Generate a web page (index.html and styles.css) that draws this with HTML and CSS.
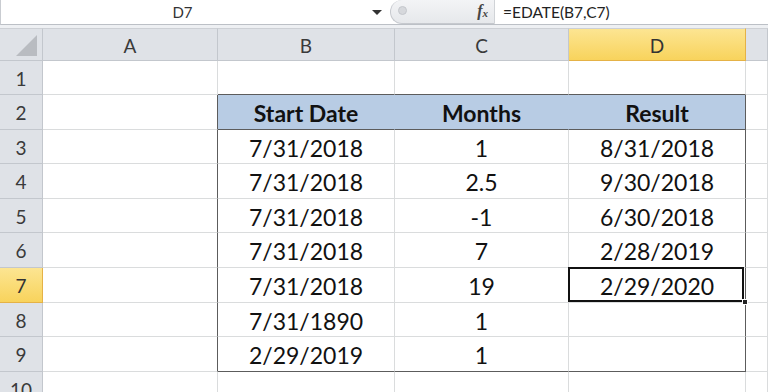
FILE: index.html
```html
<!DOCTYPE html>
<html>
<head>
<meta charset="utf-8">
<link rel="stylesheet" href="styles.css">
</head>
<body>
<div class="app">
  <div class="topbar">
    <div class="namebox">
      <span class="name">D7</span>
      <span class="arrow"></span>
    </div>
    <div class="fxbtns">
      <span class="knob"></span>
      <span class="fx">f<sub>x</sub></span>
    </div>
    <div class="formula">=EDATE(B7,C7)</div>
  </div>
  <div class="sep"></div>
  <div class="sheet">
    <div class="corner"><span class="tri"></span></div>
    <div class="ch">A</div><div class="ch">B</div><div class="ch">C</div><div class="ch selh">D</div><div class="ch"></div>

    <div class="rh">1</div><div class="c"></div><div class="c t-top"></div><div class="c t-top"></div><div class="c t-top"></div><div class="c"></div>

    <div class="rh">2</div><div class="c t-l"></div><div class="c th">Start Date</div><div class="c th">Months</div><div class="c th t-r">Result</div><div class="c"></div>

    <div class="rh">3</div><div class="c t-l"></div><div class="c">7/31/2018</div><div class="c">1</div><div class="c t-r">8/31/2018</div><div class="c"></div>

    <div class="rh">4</div><div class="c t-l"></div><div class="c">7/31/2018</div><div class="c">2.5</div><div class="c t-r">9/30/2018</div><div class="c"></div>

    <div class="rh">5</div><div class="c t-l"></div><div class="c">7/31/2018</div><div class="c">-1</div><div class="c t-r">6/30/2018</div><div class="c"></div>

    <div class="rh">6</div><div class="c t-l"></div><div class="c">7/31/2018</div><div class="c">7</div><div class="c t-r">2/28/2019</div><div class="c"></div>

    <div class="rh selh">7</div><div class="c t-l"></div><div class="c">7/31/2018</div><div class="c">19</div><div class="c t-r sel">2/29/2020<span class="handle"></span></div><div class="c"></div>

    <div class="rh">8</div><div class="c t-l"></div><div class="c">7/31/1890</div><div class="c">1</div><div class="c t-r"></div><div class="c"></div>

    <div class="rh">9</div><div class="c t-l"></div><div class="c t-bot">2/29/2019</div><div class="c t-bot">1</div><div class="c t-r t-bot"></div><div class="c"></div>

    <div class="rh">10</div><div class="c"></div><div class="c"></div><div class="c"></div><div class="c"></div><div class="c"></div>
  </div>
</div>
</body>
</html>
```
FILE: styles.css
```css
* { box-sizing: border-box; }
html, body { margin: 0; padding: 0; background: #fff; }
body { width: 768px; height: 392px; overflow: hidden; font-family: Lato, "Open Sans", sans-serif; color: #111; }

.app { display: flex; flex-direction: column; height: 392px; overflow: hidden; }

.topbar {
  display: flex;
  flex: none;
  height: 25px;
  border-bottom: 1px solid #bcc0c6;
  border-left: 1px solid #c9ccd1;
  background: #fff;
}
.namebox {
  width: 389px;
  display: flex;
  align-items: center;
}
.name {
  width: 363px;
  text-align: center;
  font-size: 15px;
  color: #333;
}
.arrow {
  width: 0; height: 0;
  margin-left: 8px;
  border-left: 5px solid transparent;
  border-right: 5px solid transparent;
  border-top: 5px solid #333;
}
.fxbtns {
  width: 105px;
  height: 24px;
  background: linear-gradient(#f3f4f6, #e6e8eb);
  border: 1px solid #c6c9ce;
  border-right: 1px solid #d0d3d7;
  border-top: none;
  border-radius: 12px 0 0 12px;
  display: flex;
  align-items: center;
  justify-content: space-between;
  padding: 0 6px 0 7px;
}
.knob {
  width: 9px; height: 9px;
  border-radius: 50%;
  background: #d6d8dc;
  border: 1px solid #c4c7cc;
  margin-top: -3px;
}
.fx {
  font-family: "Liberation Serif", serif;
  font-style: italic;
  font-weight: bold;
  font-size: 16px;
  color: #444;
  margin-top: -2px;
}
.fx sub { font-size: 11px; vertical-align: -1px; }
.formula {
  flex: 1;
  display: flex;
  align-items: center;
  padding-left: 8px;
  font-size: 15.5px;
  color: #222;
}
.sep { flex: none; height: 3px; background: #eef0f3; }

.sheet {
  flex: none;
  display: grid;
  grid-template-columns: 43px 175px 177px 174px 177px 1fr;
  grid-template-rows: 33px 34px 35px 34px 35px 34px 35px 35px 34px 35px 35px;
}

.corner, .ch, .rh {
  background: #dfe2e7;
  border-right: 1px solid #c3c7cd;
  border-bottom: 1px solid #c3c7cd;
  color: #3a3a3a;
  display: flex;
  align-items: center;
  justify-content: center;
  font-size: 19px;
}
.corner { position: relative; border-top: 1px solid #cdd0d5; }
.ch { border-top: 1px solid #cdd0d5; padding-top: 2px; }
.rh { padding-top: 1px; }
.tri {
  position: absolute;
  right: 5px; bottom: 4px;
  width: 0; height: 0;
  border-left: 21px solid transparent;
  border-bottom: 21px solid #b9bcc1;
}
.selh {
  background: linear-gradient(#fce592, #f8d35c);
  border-right-color: #e5b246;
  border-bottom-color: #e5b246;
  color: #333;
}

.c {
  border-right: 1px solid #dadcdd;
  border-bottom: 1px solid #dadcdd;
  display: flex;
  align-items: center;
  justify-content: center;
  font-size: 23px;
  padding-top: 2px;
  color: #111;
}
.t-top { border-bottom-color: #5c5c5c; }
.t-l { border-right-color: #5c5c5c; }
.t-r { border-right-color: #5c5c5c; }
.t-bot { border-bottom-color: #5c5c5c; }
.th {
  background: #b8cce4;
  font-weight: bold;
  border-bottom-color: #5c5c5c;
  color: #111;
}
.c.th { border-right-color: #b8cce4; }
.c.th.t-r { border-right-color: #5c5c5c; }

.sel { position: relative; }
.sel::after {
  content: "";
  position: absolute;
  left: -1px; top: -1px; right: 1px; bottom: 0;
  border: 2px solid #111;
  pointer-events: none;
}
.handle {
  position: absolute;
  right: -3px; bottom: -3px;
  width: 6px; height: 6px;
  background: #222;
  border: 1px solid #fff;
  z-index: 2;
}
```
